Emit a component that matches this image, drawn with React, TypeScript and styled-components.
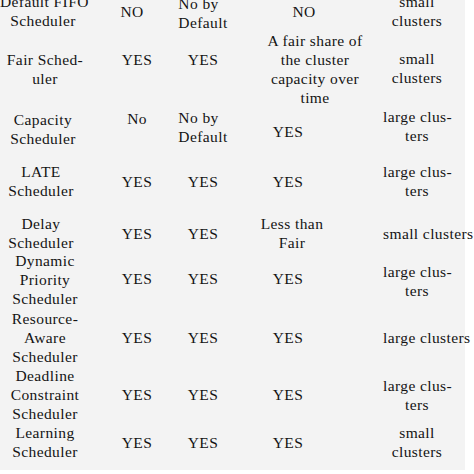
import React from 'react'
import styled, { createGlobalStyle } from 'styled-components'

interface CellData {
    lines: string[]; // text lines, already broken as in the source table
    dx?: number; // horizontal centre shift in px
    dy?: number; // vertical shift in px
    left?: boolean; // left aligned block, centred in the column
}

interface RowData {
    height: number;
    cells: CellData[];
}

// column boxes [start, end, centre]
const columns: [number, number, number][] = [
    [0, 104, 43],
    [104, 170, 137],
    [170, 236, 203],
    [236, 383, 288],
    [383, 465, 417],
]

const rows: RowData[] = [
    { height: 40, cells: [
        { lines: ['Default FIFO', 'Scheduler'] },
        { lines: ['NO'], dx: -5 },
        { lines: ['No by', 'Default'], left: true, dy: 2 },
        { lines: ['NO'], dx: 16 },
        { lines: ['small', 'clusters'] },
    ]},
    { height: 77, cells: [
        { lines: ['Fair Sched-', 'uler'], dx: 2 },
        { lines: ['YES'], dy: -9 },
        { lines: ['YES'], dy: -9 },
        { lines: ['A fair share of', 'the cluster', 'capacity over', 'time'], dx: 27 },
        { lines: ['small', 'clusters'], dy: -1 },
    ]},
    { height: 41, cells: [
        { lines: ['Capacity', 'Scheduler'] },
        { lines: ['No'], dy: -11 },
        { lines: ['No by', 'Default'], left: true, dy: -2 },
        { lines: ['YES'], dy: 2 },
        { lines: ['large clus-', 'ters'], dy: -3 },
    ]},
    { height: 66, cells: [
        { lines: ['LATE', 'Scheduler'], dx: -2 },
        { lines: ['YES'] },
        { lines: ['YES'] },
        { lines: ['YES'] },
        { lines: ['large clus-', 'ters'] },
    ]},
    { height: 36, cells: [
        { lines: ['Delay', 'Scheduler'], dx: -2 },
        { lines: ['YES'] },
        { lines: ['YES'] },
        { lines: ['Less than', 'Fair'], dx: 4 },
        { lines: ['small clusters'] },
    ]},
    { height: 58, cells: [
        { lines: ['Dynamic', 'Priority', 'Scheduler'], dx: 2 },
        { lines: ['YES'], dy: -1 },
        { lines: ['YES'], dy: -1 },
        { lines: ['YES'], dy: -1 },
        { lines: ['large clus-', 'ters'], dy: 2 },
    ]},
    { height: 58, cells: [
        { lines: ['Resource-', 'Aware', 'Scheduler'], dx: 2 },
        { lines: ['YES'] },
        { lines: ['YES'] },
        { lines: ['YES'] },
        { lines: ['large clusters'] },
    ]},
    { height: 57, cells: [
        { lines: ['Deadline', 'Constraint', 'Scheduler'], dx: 2 },
        { lines: ['YES'] },
        { lines: ['YES'] },
        { lines: ['YES'] },
        { lines: ['large clus-', 'ters'] },
    ]},
    { height: 38, cells: [
        { lines: ['Learning', 'Scheduler'], dx: 2 },
        { lines: ['YES'] },
        { lines: ['YES'] },
        { lines: ['YES'] },
        { lines: ['small', 'clusters'] },
    ]},
]

// padding that centres the widest possible content box on the wanted centre
const cellPadding = (col: number, cell: CellData) => {
    const [x0, x1, c0] = columns[col]
    const c = c0 + (cell.dx ?? 0)
    const half = Math.min(c - x0, x1 - c)
    const dy = cell.dy ?? 0
    return {
        left: c - half - x0,
        right: x1 - (c + half),
        top: Math.max(0, 2 * dy),
        bottom: Math.max(0, -2 * dy),
    }
}

export default function App() {
    return (
        <>
            <GlobalStyle />
            <Table>
                {rows.map((row, r) => (
                    <Row key={`row-${r}`} $height={row.height}>
                        {row.cells.map((cell, c) => {
                            const p = cellPadding(c, cell)
                            return (
                                <Cell key={`cell-${r}-${c}`} $pl={p.left} $pr={p.right} $pt={p.top} $pb={p.bottom}>
                                    <Text $left={cell.left}>
                                        {cell.lines.map((line, i) => <Line key={i}>{line}</Line>)}
                                    </Text>
                                </Cell>
                            )
                        })}
                    </Row>
                ))}
            </Table>
        </>
    )
}

const GlobalStyle = createGlobalStyle`
    html, body {
        margin: 0;
        padding: 0;
        background: #ffffff;
        overflow: hidden;
        font-family: "Liberation Serif", serif;
    }
`

const Table = styled.div`
    display: flex;
    flex-direction: column;
    width: 465px;
    height: 480px;
    margin-top: -10px;
    padding-bottom: 9px;
    box-sizing: border-box;
    background: #f3f3f3;
    color: #141414;
    font-family: "Liberation Serif", serif;
    font-size: 15.5px;
    letter-spacing: 0.4px;
    line-height: 19px;
`

const Row = styled.div<{ $height: number }>`
    display: grid;
    grid-template-columns: 104px 66px 66px 147px 82px;
    height: ${p => p.$height}px;
    flex-shrink: 0;
`

const Cell = styled.div<{ $pl: number; $pr: number; $pt: number; $pb: number }>`
    display: flex;
    flex-direction: column;
    justify-content: center;
    padding: ${p => `${p.$pt}px ${p.$pr}px ${p.$pb}px ${p.$pl}px`};
    min-width: 0;
`

const Text = styled.div<{ $left?: boolean }>`
    text-align: ${p => (p.$left ? 'left' : 'center')};
    align-self: ${p => (p.$left ? 'center' : 'stretch')};
`

const Line = styled.div`
    white-space: nowrap;
`
